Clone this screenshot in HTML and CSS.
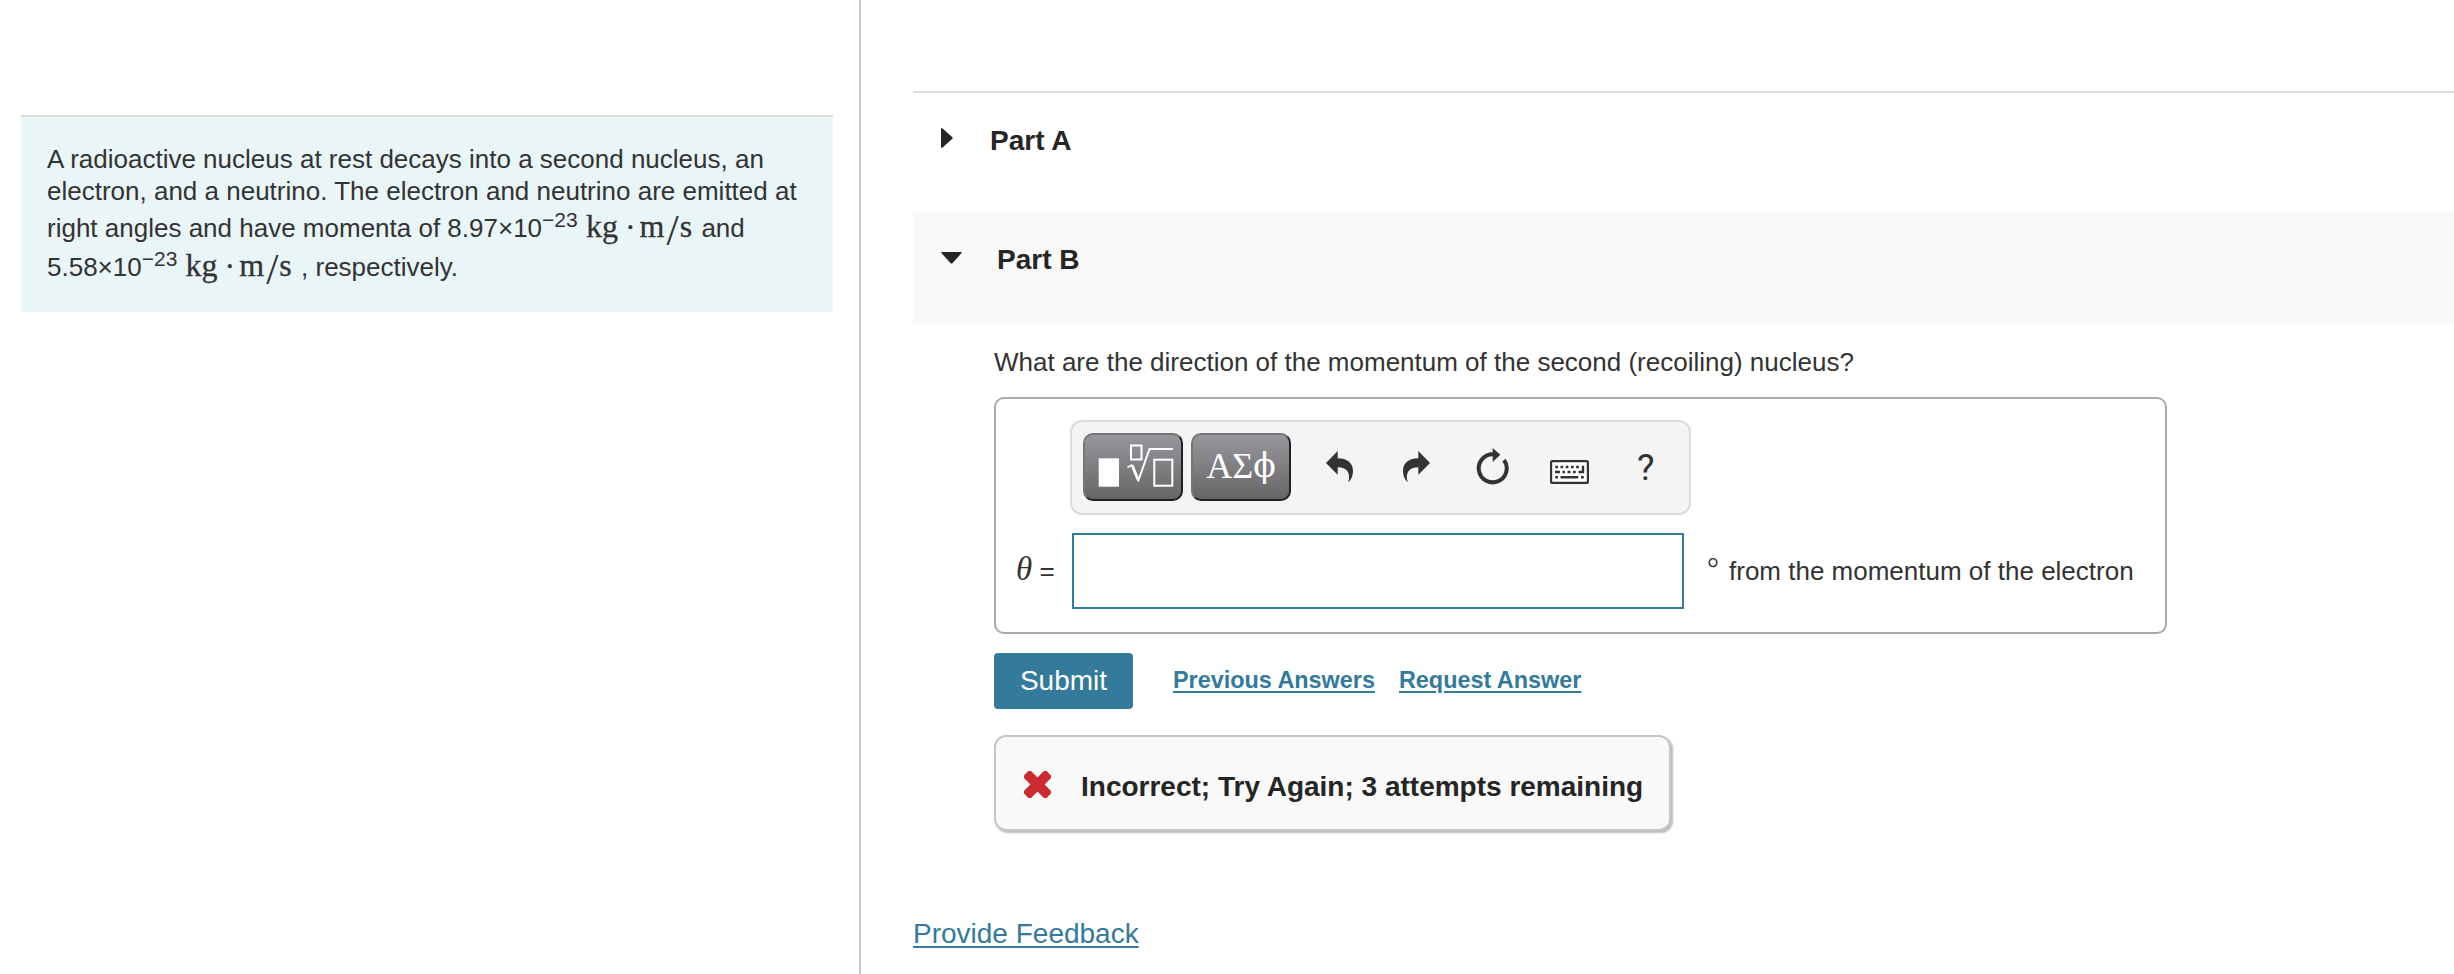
FILE: index.html
```html
<!DOCTYPE html>
<html lang="en">
<head>
    <meta charset="UTF-8">
    <meta name="viewport" content="width=device-width, initial-scale=1.0">
    <title>Momentum of the recoiling nucleus</title>
    <link rel="stylesheet" href="styles.css">
</head>
<body>
    <div class="page">
        <aside class="sidebar">
            <div class="problem">
                <div class="line">A radioactive nucleus at rest decays into a second nucleus, an</div>
                <div class="line">electron, and a neutrino. The electron and neutrino are emitted at</div>
                <div class="line line-math">right angles and have momenta of 8.97×10<span class="exp">−23</span> <span class="unit">kg<span class="dot">·</span><span class="metre">m</span><span class="slash">/</span>s</span> and</div>
                <div class="line line-math">5.58×10<span class="exp">−23</span> <span class="unit">kg<span class="dot">·</span><span class="metre">m</span><span class="slash">/</span>s</span> , respectively.</div>
            </div>
        </aside>
        <main class="content">
            <div class="part part-a">
                <svg class="arrow" width="12" height="20" viewBox="0 0 12 20"><path d="M0 1Q0 0 1 0L11.4 9.2Q12 10 11.4 10.8L1 20Q0 20 0 19Z" fill="#252525"/></svg>
                <h2>Part A</h2>
            </div>
            <div class="part part-b">
                <svg class="arrow" width="21" height="12" viewBox="0 0 21 12"><path d="M1 0H20Q21 0 20.6 1L11.4 11.2Q10.5 12 9.6 11.2L.4 1Q0 0 1 0Z" fill="#252525"/></svg>
                <h2>Part B</h2>
            </div>
            <div class="part-body">
                <p class="question">What are the direction of the momentum of the second (recoiling) nucleus?</p>
                <div class="answer-box">
                    <div class="toolbar">
                        <button type="button" class="tool-btn template">
                            <svg width="80" height="50" viewBox="0 0 80 50" fill="none" stroke="#fff" stroke-width="2">
                                <rect x="1.7" y="16.3" width="20.3" height="28.4" fill="#fff" stroke="none"/>
                                <rect x="34" y="3.5" width="10.5" height="14"/>
                                <path d="M30.5 25.5L35 22.8" stroke-width="1.6"/>
                                <path d="M35 23L41 37.5" stroke-width="3"/>
                                <path d="M41 39.5L52.5 7H76"/>
                                <rect x="57.3" y="17.7" width="18" height="26"/>
                            </svg>
                        </button>
                        <button type="button" class="tool-btn greek">ΑΣ<span class="phi">ϕ</span></button>
                        <svg class="icon undo" width="27" height="32" viewBox="0 0 27 32"><path d="M0 12L11.7 0V7.3C21 7.3 27 12 27 20C27 25 25 29 22.3 31.5C25 22 21 16.3 11.7 16.3V23.7Z"/></svg>
                        <svg class="icon redo" width="27" height="32" viewBox="0 0 27 32"><path d="M27 12L15.3 0V7.3C6 7.3 0 12 0 20C0 25 2 29 4.7 31.5C2 22 6 16.3 15.3 16.3V23.7Z"/></svg>
                        <svg class="icon reset" width="34" height="38" viewBox="0 0 34 38"><path d="M28 13A14 14 0 1 1 17 7.3" fill="none" stroke="#333" stroke-width="4"/><path d="M16.7 1L24.3 7.8L16.7 15Z"/></svg>
                        <svg class="icon keyboard" width="39" height="24" viewBox="0 0 39 24">
                            <rect x="1.1" y="1.1" width="36.8" height="21.8" rx="1.5" fill="#fff" stroke="#333" stroke-width="2.2"/>
                            <path d="M5.3 7H29.2" stroke="#333" stroke-width="2.4" stroke-dasharray="2.7 2.5"/>
                            <path d="M5 12H10M12.5 12H15M17.5 12H20.5M23 12H25.7M28.5 12H34M33 5.8V13.2" stroke="#333" stroke-width="2.4"/>
                            <path d="M5.3 17.3H8M10.5 17.3H28.3M31 17.3H33.8" stroke="#333" stroke-width="2.4"/>
                        </svg>
                        <span class="help">?</span>
                    </div>
                    <div class="answer-row">
                        <label for="theta"><i>θ</i> =</label>
                        <input type="text" id="theta">
                        <span class="degree">°</span>
                        <span class="suffix">from the momentum of the electron</span>
                    </div>
                </div>
                <div class="actions">
                    <button type="submit" class="submit">Submit</button>
                    <a href="#" class="previous">Previous Answers</a>
                    <a href="#">Request Answer</a>
                </div>
                <div class="feedback">
                    <svg width="27" height="27" viewBox="0 0 27 27" fill="#cc2a2e">
                        <rect x="-2.5" y="8.5" width="32" height="10" rx="2.2" transform="rotate(45 13.5 13.5)"/>
                        <rect x="-2.5" y="8.5" width="32" height="10" rx="2.2" transform="rotate(-45 13.5 13.5)"/>
                    </svg>
                    <span>Incorrect; Try Again; 3 attempts remaining</span>
                </div>
            </div>
            <a href="#" class="provide">Provide Feedback</a>
        </main>
    </div>
</body>
</html>
```
FILE: styles.css
```css
* {
    box-sizing: border-box;
}

body {
    margin: 0;
    background: #fff;
    color: #333;
    font-family: "Liberation Sans", Arial, sans-serif;
    font-size: 26px;
}

.page {
    display: flex;
    height: 974px;
    overflow: hidden;
}

/* left column */
.sidebar {
    width: 861px;
    flex: none;
    padding: 115px 26px 0 21px;
    border-right: 2px solid #bbc9db;
}

.problem {
    height: 197px;
    padding: 26px 0 0 26px;
    background: #eaf5f7;
    border-top: 2px solid #dcdcdc;
}

.line {
    height: 32px;
    line-height: 32px;
    white-space: nowrap;
}

.line-math {
    height: 39px;
    line-height: 42px;
}

.exp {
    margin-right: 1px;
    font-size: 21px;
    line-height: 0;
    vertical-align: 10px;
}

.unit {
    margin-right: 2px;
    font-family: "Liberation Serif", "Times New Roman", serif;
    font-size: 32px;
    line-height: 0;
    -webkit-text-stroke: 0.3px #333;
}

.dot {
    margin: 0 4px 0 7px;
    vertical-align: -1px;
}

.metre {
    letter-spacing: 1px;
}

.slash {
    margin: 0 1px;
    font-size: 44px;
    vertical-align: -8px;
    -webkit-text-stroke: 0;
}

/* right column */
.content {
    flex: 1;
    padding: 91px 0 0 52px;
}

.part {
    display: flex;
    align-items: flex-start;
    padding-left: 28px;
    color: #252525;
}

.part h2 {
    margin: 0;
    font-size: 28px;
    line-height: 32px;
}

.part-a {
    height: 121px;
    padding-top: 32px;
    border-top: 2px solid #dedede;
}

.part-a .arrow {
    margin: 3px 37px 0 0;
}

.part-b {
    height: 113px;
    padding-top: 32px;
    background: #f9f9f9;
}

.part-b .arrow {
    margin: 8px 35px 0 0;
}

.part-body {
    padding-left: 81px;
}

.question {
    margin: 0;
    padding: 21px 0 0;
    height: 72px;
    line-height: 32px;
}

.answer-box {
    width: 1173px;
    height: 237px;
    padding: 21px 0 0 20px;
    border: 2px solid #a9a9a9;
    border-radius: 10px;
}

.toolbar {
    display: flex;
    align-items: flex-start;
    width: 621px;
    height: 95px;
    margin-left: 54px;
    padding: 11px;
    background: #f4f4f4;
    border: 2px solid #dcdcdc;
    border-radius: 12px;
}

.tool-btn {
    width: 100px;
    height: 68px;
    margin-right: 8px;
    padding: 0;
    display: flex;
    align-items: center;
    justify-content: center;
    background: linear-gradient(#99989f, #646464);
    background-origin: border-box;
    border: 2px solid;
    border-color: #767676 #212121 #212121 #767676;
    border-radius: 10px;
    color: #fff;
}

.template {
    padding: 0 0 0 8px;
}

.greek {
    padding-bottom: 3px;
    font: 36px "Liberation Serif", "DejaVu Serif", serif;
}

.phi {
    font-family: "DejaVu Serif", serif;
    font-size: 33px;
    line-height: 36px;
}

.icon {
    flex: none;
    fill: #333;
}

.undo {
    margin: 18px 0 0 27px;
}

.redo {
    margin: 18px 0 0 50px;
}

.reset {
    margin: 14px 0 0 46px;
}

.keyboard {
    margin: 27px 0 0 40px;
}

.help {
    margin: 15px 0 0 48px;
    font-family: Roboto, sans-serif;
    font-size: 37px;
    line-height: 40px;
}

.answer-row {
    display: flex;
    align-items: center;
    margin-top: 18px;
    height: 76px;
    white-space: nowrap;
}

.answer-row label {
    width: 56px;
    line-height: 36px;
}

.answer-row label i {
    font-family: "Liberation Serif", serif;
    font-size: 33px;
    line-height: 0;
}

.answer-row input {
    width: 612px;
    height: 76px;
    border: 2px solid #337a9b;
    background: #fff;
}

.degree {
    width: 20px;
    margin: -6px 2px 0 23px;
    font-family: "Liberation Serif", serif;
    font-size: 30px;
}

.actions {
    display: flex;
    align-items: center;
    height: 56px;
    margin-top: 19px;
}

.submit {
    width: 139px;
    height: 56px;
    padding: 0;
    border: none;
    border-radius: 4px;
    background: #337a9b;
    color: #fff;
    font-family: inherit;
    font-size: 28px;
}

.actions a {
    padding-bottom: 2px;
    color: #337a9b;
    font-size: 23.4px;
    font-weight: bold;
    text-decoration-thickness: 2px;
    text-underline-offset: 3px;
}

.actions .previous {
    margin: 0 24px 0 40px;
}

.feedback {
    display: flex;
    width: 677px;
    height: 96px;
    margin-top: 26px;
    padding: 34px 0 0 28px;
    background: #f9f9f9;
    border: 2px solid #c6c6c6;
    border-radius: 12px;
    box-shadow: 2px 2px 2px #bbb;
    color: #252525;
    font-size: 28px;
    font-weight: bold;
    line-height: 32px;
}

.feedback span {
    margin-left: 30px;
}

.provide {
    display: inline-block;
    margin-top: 87px;
    color: #337a9b;
    font-size: 28px;
    line-height: 32px;
    text-decoration-thickness: 2px;
    text-underline-offset: 3px;
}
```
